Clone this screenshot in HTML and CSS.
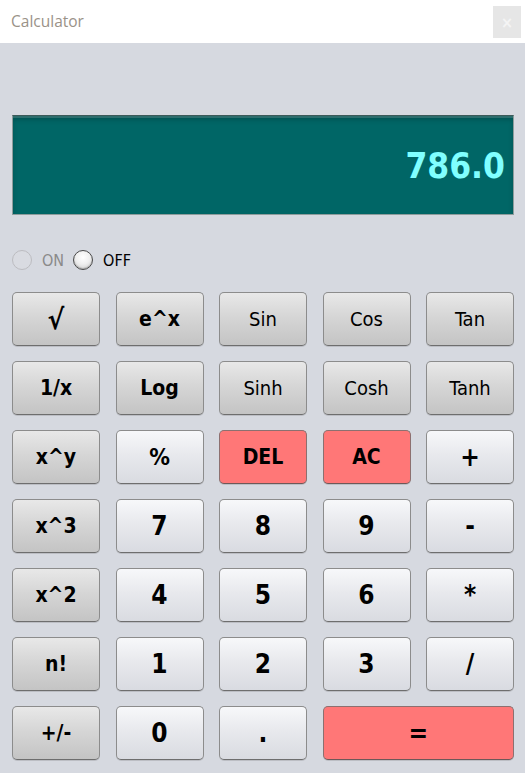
FILE: index.html
```html
<!DOCTYPE html>
<html>
<head>
<meta charset="utf-8">
<title>Calculator</title>
<link rel="stylesheet" href="styles.css">
</head>
<body>
<div class="titlebar">
  <span class="title">Calculator</span>
  <span class="close">×</span>
</div>
<main class="app">
  <div class="display"><span class="value">786.0</span></div>
  <div class="power">
    <label class="radio disabled"><span class="dot"></span><span class="lbl">ON</span></label>
    <label class="radio"><span class="dot"></span><span class="lbl">OFF</span></label>
  </div>
  <div class="keys">
    <button class="key fn big">√</button>
    <button class="key fn">e^x</button>
    <button class="key fn plain">Sin</button>
    <button class="key fn plain">Cos</button>
    <button class="key fn plain">Tan</button>

    <button class="key fn">1/x</button>
    <button class="key fn">Log</button>
    <button class="key fn plain">Sinh</button>
    <button class="key fn plain">Cosh</button>
    <button class="key fn plain">Tanh</button>

    <button class="key fn">x^y</button>
    <button class="key num mid">%</button>
    <button class="key red">DEL</button>
    <button class="key red">AC</button>
    <button class="key num">+</button>

    <button class="key fn">x^3</button>
    <button class="key num">7</button>
    <button class="key num">8</button>
    <button class="key num">9</button>
    <button class="key num">-</button>

    <button class="key fn">x^2</button>
    <button class="key num">4</button>
    <button class="key num">5</button>
    <button class="key num">6</button>
    <button class="key num">*</button>

    <button class="key fn">n!</button>
    <button class="key num">1</button>
    <button class="key num">2</button>
    <button class="key num">3</button>
    <button class="key num">/</button>

    <button class="key fn">+/-</button>
    <button class="key num">0</button>
    <button class="key num">.</button>
    <button class="key red wide">=</button>
  </div>
</main>
</body>
</html>
```
FILE: styles.css
```css
html, body {
  margin: 0;
  padding: 0;
}
body {
  width: 525px;
  height: 773px;
  background: #d6d9e0;
  font-family: "DejaVu Sans Condensed", "DejaVu Sans", sans-serif;
  font-stretch: condensed;
  overflow: hidden;
}
.titlebar {
  height: 43px;
  background: #ffffff;
  display: flex;
  justify-content: space-between;
  align-items: flex-start;
  box-sizing: border-box;
  padding: 0 4px 0 11px;
}
.title {
  font-family: "Open Sans", "Noto Sans", sans-serif;
  font-stretch: normal;
  font-size: 15.5px;
  color: #9a9288;
  line-height: 43px;
}
.close {
  margin-top: 6px;
  width: 28px;
  height: 32px;
  background: #e6e6e6;
  color: #f4f4f4;
  font-family: "DejaVu Sans", sans-serif;
  font-size: 16px;
  font-weight: bold;
  display: flex;
  align-items: center;
  justify-content: center;
}
.app {
  padding: 0 11px 0 12px;
}
.display {
  margin-top: 72px;
  height: 100px;
  box-sizing: border-box;
  border: 1px solid #8e9c9c;
  border-top-color: #3d5a5a;
  background: #006666;
  box-shadow: inset 0 2px 0 #2d6e6e, inset 0 4px 4px rgba(0, 30, 30, 0.25);
  display: flex;
  align-items: center;
  justify-content: flex-end;
  padding-right: 8px;
}
.value {
  color: #80ffff;
  font-weight: bold;
  font-size: 35px;
  padding-top: 2px;
}
.power {
  margin-top: 35px;
  height: 20px;
  display: flex;
  align-items: center;
  gap: 9px;
}
.radio {
  display: flex;
  align-items: center;
  gap: 10px;
  font-family: "DejaVu Sans Condensed", "DejaVu Sans", sans-serif;
  font-stretch: condensed;
  font-size: 16px;
  color: #000;
}
.dot {
  width: 18px;
  height: 18px;
  border-radius: 50%;
  border: 1px solid #4a4a4a;
  background: radial-gradient(circle at 50% 35%, #ffffff 0%, #f0f0f0 45%, #c8c8c8 100%);
  box-shadow: inset 0 -1px 1px rgba(0,0,0,0.2);
}
.radio.disabled .dot {
  border-color: #bcbcc0;
  background: #d9dbe1;
  box-shadow: none;
}
.radio.disabled .lbl {
  color: #8a8a8a;
}
.keys {
  margin-top: 22px;
  width: 502px;
  display: grid;
  grid-template-columns: repeat(5, 1fr);
  grid-auto-rows: 54px;
  column-gap: 15.5px;
  row-gap: 15px;
}
.key {
  margin: 0;
  padding: 0;
  border: 1px solid #8c8c8c;
  border-bottom-color: #6e6e6e;
  border-radius: 5px;
  font-family: "DejaVu Sans Condensed", "DejaVu Sans", sans-serif;
  font-stretch: condensed;
  font-weight: bold;
  color: #000;
  box-shadow: 0 1px 0 rgba(0, 0, 0, 0.12);
  display: flex;
  align-items: center;
  justify-content: center;
}
.fn {
  background: linear-gradient(to bottom, #e8e8e8 0%, #d6d6d6 45%, #c4c4c4 100%);
  font-size: 21px;
}
.fn.plain {
  font-weight: normal;
  font-size: 20px;
}
.fn.big {
  font-size: 28px;
}
.num {
  background: linear-gradient(to bottom, #f7f8fa 0%, #e8e9ed 45%, #d9dbe1 100%);
  font-size: 26px;
}
.num.mid {
  font-size: 23px;
}
.red {
  background: #ff7777;
  border-color: #8c7070;
  border-bottom-color: #6e5858;
  font-size: 21px;
}
.wide {
  grid-column: span 2;
  font-size: 26px;
}
```
